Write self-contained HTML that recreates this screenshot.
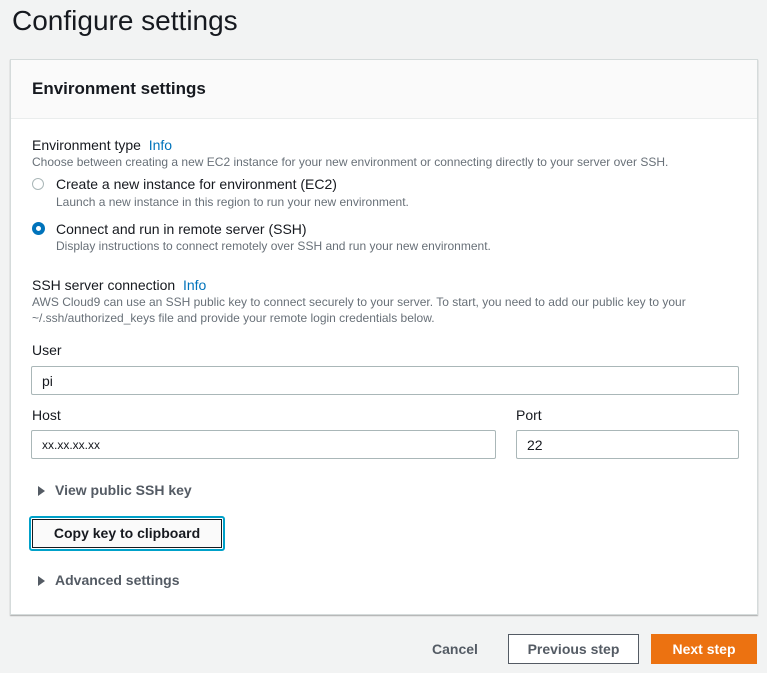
<!DOCTYPE html>
<html><head><style>
body{margin:0;width:767px;height:673px;background:#f2f3f3;font-family:"Liberation Sans",sans-serif;color:#16191f;position:relative;overflow:hidden}
.a{position:absolute;white-space:nowrap}
.card{position:absolute;left:10px;top:59px;width:746px;height:554px;background:#fff;border:1px solid #d5dbdb;box-shadow:0 1px 1px rgba(0,0,0,.3)}
.hd{position:absolute;left:0;top:0;width:746px;height:58px;background:#fafafa;border-bottom:1px solid #eaeded}
.lbl{font-size:14px;color:#16191f}
.desc{font-size:12px;color:#687078}
.info{color:#0073bb}
.inp{position:absolute;height:27px;border:1px solid #aab7b8;background:#fff;box-sizing:border-box;font-size:14px;padding:6px 10px;border-radius:2px}
.tri{display:inline-block;width:0;height:0;border-top:5px solid transparent;border-bottom:5px solid transparent;border-left:7px solid #545b64;margin-right:10px;vertical-align:-1px}
.exp{font-size:14px;font-weight:bold;color:#545b64}
</style></head><body>
<div class="a" style="left:12px;top:5px;font-size:28px;color:#16191f">Configure settings</div>
<div class="card">
 <div class="hd"></div>
 <div class="a" style="left:21px;top:19px;font-size:17px;font-weight:bold">Environment settings</div>
 <div class="a lbl" style="left:21px;top:77px">Environment type&nbsp; <span class="info">Info</span></div>
 <div class="a desc" style="left:21px;top:95px">Choose between creating a new EC2 instance for your new environment or connecting directly to your server over SSH.</div>
 <div class="a" style="left:21px;top:118px;width:12px;height:12px;border:1px solid #aab7b8;border-radius:50%;box-sizing:border-box"></div>
 <div class="a lbl" style="left:45px;top:116px">Create a new instance for environment (EC2)</div>
 <div class="a desc" style="left:45px;top:135px">Launch a new instance in this region to run your new environment.</div>
 <div class="a" style="left:21px;top:162px;width:13px;height:13px;border:4px solid #0073bb;border-radius:50%;box-sizing:border-box;background:#fff"></div>
 <div class="a lbl" style="left:45px;top:161px">Connect and run in remote server (SSH)</div>
 <div class="a desc" style="left:45px;top:179px">Display instructions to connect remotely over SSH and run your new environment.</div>
 <div class="a lbl" style="left:21px;top:217px">SSH server connection&nbsp; <span class="info">Info</span></div>
 <div class="a desc" style="left:21px;top:234px;line-height:16px">AWS Cloud9 can use an SSH public key to connect securely to your server. To start, you need to add our public key to your<br>~/.ssh/authorized_keys file and provide your remote login credentials below.</div>
 <div class="a lbl" style="left:21px;top:282px">User</div>
 <div class="inp" style="left:20px;top:306px;width:708px;height:29px">pi</div>
 <div class="a lbl" style="left:21px;top:347px">Host</div>
 <div class="inp" style="left:20px;top:370px;width:465px;height:29px;font-size:12px;padding-top:7px">xx.xx.xx.xx</div>
 <div class="a lbl" style="left:505px;top:347px">Port</div>
 <div class="inp" style="left:505px;top:370px;width:223px;height:29px">22</div>
 <div class="a exp" style="left:27px;top:422px"><span class="tri"></span>View public SSH key</div>
 <div class="a" style="left:18px;top:456px;width:196px;height:35px;border:2px solid #00a1c9;border-radius:3px;box-sizing:border-box"></div>
 <div class="a" style="left:21px;top:459px;width:190px;height:29px;border:1px solid #16191f;box-sizing:border-box;background:#fafafa;font-size:14px;font-weight:bold;text-align:center;line-height:27px">Copy key to clipboard</div>
 <div class="a exp" style="left:27px;top:512px"><span class="tri"></span>Advanced settings</div>
</div>
<div class="a" style="left:432px;top:641px;font-size:14px;font-weight:bold;color:#545b64">Cancel</div>
<div class="a" style="left:508px;top:634px;width:131px;height:30px;border:1px solid #545b64;background:#fff;box-sizing:border-box;font-size:14px;font-weight:bold;color:#545b64;text-align:center;line-height:28px">Previous step</div>
<div class="a" style="left:651px;top:634px;width:106px;height:30px;background:#ec7211;border:1px solid #ec7211;box-sizing:border-box;font-size:14px;font-weight:bold;color:#fff;text-align:center;line-height:28px">Next step</div>
</body></html>
